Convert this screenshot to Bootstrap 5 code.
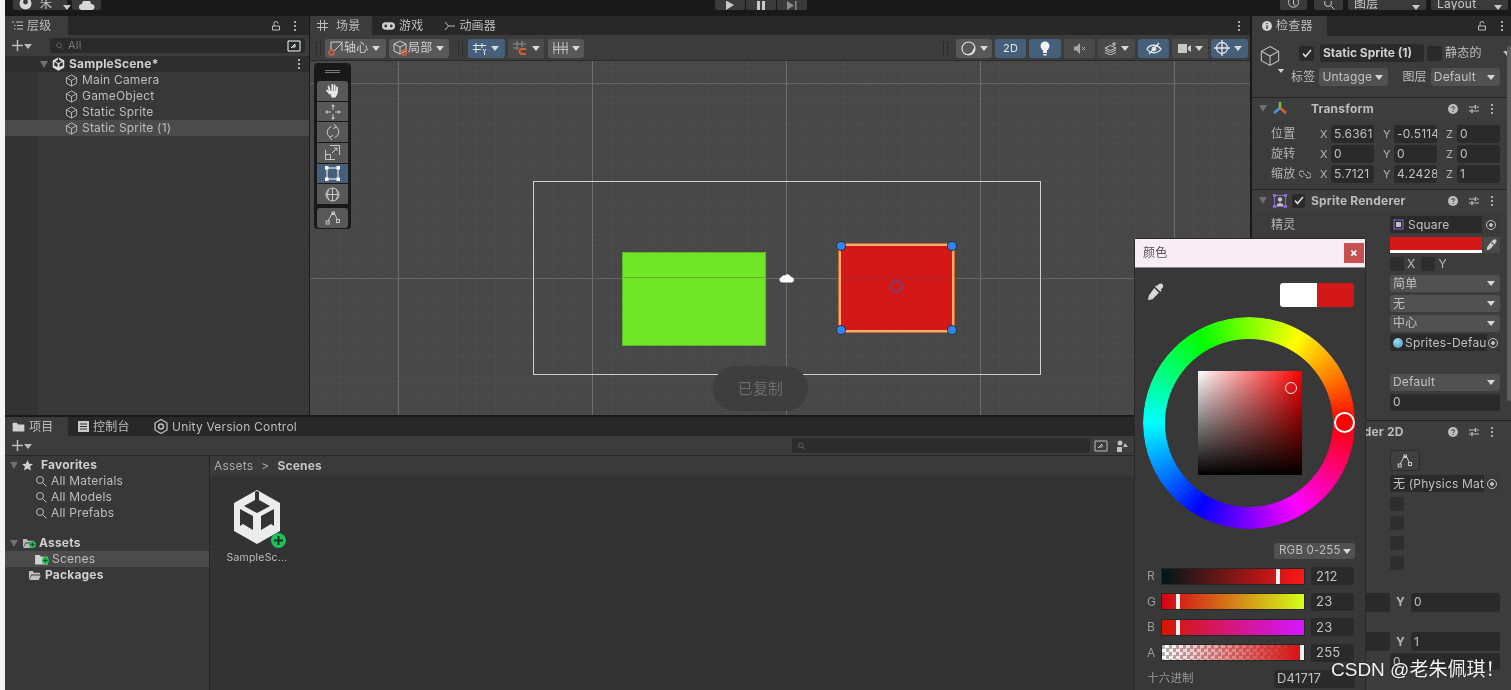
<!DOCTYPE html>
<html lang="en">
<head>
<meta charset="UTF-8">
<title>Unity Editor</title>
<link href="https://cdn.jsdelivr.net/npm/bootstrap@5.3.3/dist/css/bootstrap.min.css" rel="stylesheet">
<style>
    html, body { height: 100%; }
    body { background: #f4f4f4; overflow: hidden; margin: 0; font-family: Inter, "Noto Sans CJK SC", sans-serif; font-size: 12px; color: #bdbdbd; line-height: 1; }
    svg { display: block; flex: none; }
    .ed { height: 690px; margin-left: 5px; background: #191919; position: relative; filter: blur(.55px); overflow: hidden; white-space: nowrap; letter-spacing: .2px; }
    .ic { fill: none; stroke: currentColor; stroke-width: 1; }
    .dropdown-toggle::after { border-top: 5px solid; border-left: 4px solid transparent; border-right: 4px solid transparent; border-bottom: 0; vertical-align: 1px; }
    .topbar { height: 16px; flex: none; overflow: hidden; padding: 0 3px 0 8px; }
    .topleft { width: 702px; }
    .topgroup { height: 10px; overflow: hidden; }
    .topbtn { height: 10px; background: #3a3a3a; border-radius: 0 0 2px 2px; color: #c8c8c8; }
    .topacct { width: 54px; }
    .topcloud { width: 29px; margin-left: 5px; }
    .topplay { width: 30px; margin-right: 1px; }
    .tophist { width: 27px; margin-right: 7px; }
    .topsearch { width: 29px; margin-right: 5px; }
    .toplayer { width: 78px; margin-right: 5px; }
    .toplayout { width: 77px; }
    .topdrop { padding: 0 6px; align-items: flex-end !important; justify-content: space-between; }
    .leftcol { width: 1245px; flex: none; }
    .upper { height: 399px; flex: none; }
    .hier { width: 304px; flex: none; background: #383838; }
    .scene { margin-left: 1px; flex: 1 1 0; min-width: 0; background: #3c3c3c; }
    .tabbar { height: 19px; background: #282828; flex: none; }
    .utab { height: 19px; padding: 0 7px; }
    .utab.on { background: #3c3c3c; border-radius: 2px 2px 0 0; }
    .hier-tab { width: 63px; }
    .scene-tab { width: 62px; }
    .game-tab { padding: 0 21px 0 10px; }
    .tabkebab { margin-left: auto; margin-right: 9px; }
    .hier-tools { margin-left: auto; margin-right: 12px; gap: 12px; }
    .ins-tools { margin-left: auto; margin-right: 7px; gap: 13px; }
    .hbar { height: 21px; background: #3c3c3c; padding: 0 4px 0 6px; }
    .sfield { background: #2a2a2a; height: 15px; border-radius: 3px; color: #777; font-size: 11px; padding-left: 5px; }
    .hsearch { margin-left: 18px; flex: 1 1 0; }
    .tree { position: relative; flex: 1 1 0; background: linear-gradient(90deg, #333 0, #333 32px, #383838 32px); }
    .trow { height: 16px; }
    .trow.scn { background: #2e2e2e; padding-left: 35px; font-weight: 700; color: #d0d0d0; height: 16px; padding-right: 8px; }
    .trow.kid { padding-left: 60px; }
    .trow.sel { background: #4b4b4b; }
    .tree-tri { width: 0; height: 0; border-left: 4px solid transparent; border-right: 4px solid transparent; border-top: 7px solid #707070; }
    .sbar { height: 26px; background: #3c3c3c; border-bottom: 1px solid #2a2a2a; padding-left: 6px; padding-top: 1px; }
    .grip { width: 5px; height: 15px; border-left: 1px solid #292929; border-right: 1px solid #292929; opacity: .8; }
    .grip.mid { margin-left: 9px; }
    .ubtn { height: 19px; background: #585858; border-radius: 3px; color: #d0d0d0; }
    .ubtn.blue { background: #46607c; color: #e6e6e6; }
    .ubtn.dim { background: #4a4a4a; color: #9a9a9a; }
    .ubtn.dropdown-toggle::after { color: #d8d8d8; margin-left: 4px; }
    .b-pivot { width: 61px; margin-left: 4px; padding-left: 3px; }
    .b-local { width: 60px; margin-left: 3px; padding-left: 3px; }
    .b-snap { width: 37px; margin-left: 5px; padding-left: 5px; }
    .b-mag { width: 36px; margin-left: 3px; padding-left: 5px; }
    .b-inc { width: 36px; margin-left: 4px; padding-left: 5px; }
    .s-right { margin-left: auto; margin-right: 2px; gap: 3px; }
    .b-shade { width: 36px; padding-left: 5px; margin-left: 5px; }
    .b-2d { width: 31px; font-size: 11px; }
    .b-light { width: 32px; }
    .b-audio { width: 31px; }
    .b-fx { width: 37px; padding-left: 6px; }
    .b-hide { width: 31px; }
    .b-cam { width: 36px; padding-left: 6px; }
    .b-giz { width: 37px; padding-left: 3px; }
    .canvas { position: relative; flex: 1 1 0; overflow: hidden; background-color: #484848;
        background-image:
            linear-gradient(90deg, #6d6d6d 1px, transparent 1px),
            linear-gradient(180deg, #666 1px, transparent 1px),
            linear-gradient(90deg, #4c4c4c 1px, transparent 1px),
            linear-gradient(180deg, #4c4c4c 1px, transparent 1px);
        background-size: 194px 100%, 100% 195px, 19.4px 100%, 100% 19.5px;
        background-position: 88px 0, 0 22px, 10.4px 0, 0 3px; }
    .camrect { position: absolute; left: 223px; top: 120px; width: 508px; height: 194px; border: 1px solid #cfcfcf; }
    .sp-green { position: absolute; left: 312px; top: 191px; width: 144px; height: 94px; background: linear-gradient(180deg, transparent 25px, rgba(80,110,60,.45) 25px, rgba(80,110,60,.45) 26px, transparent 26px), #70e626; box-shadow: inset 0 0 0 1px #5cb82a; }
    .sp-red { position: absolute; left: 529px; top: 183px; width: 115px; height: 88px; background: linear-gradient(180deg, transparent 32px, rgba(120,60,60,.4) 32px, rgba(120,60,60,.4) 33px, transparent 33px), #d41717; border: 2px solid #f0b070; box-shadow: 0 0 0 1px #d0662a; }
    .hnd { position: absolute; width: 8px; height: 8px; border-radius: 50%; background: #2f86ea; box-shadow: 0 0 0 1px #24344c; }
    .hnd.a { left: -4px; top: -4px; }
    .hnd.b { right: -4px; top: -4px; }
    .hnd.c { left: -4px; bottom: -4px; }
    .hnd.d { right: -4px; bottom: -4px; }
    .pvt { position: absolute; left: 50%; top: 50%; width: 13px; height: 13px; margin: -8px 0 0 -7px; border: 2px solid #7d3f72; border-radius: 50%; }
    .camgiz { position: absolute; left: 469px; top: 210px; color: #fff; }
    .toast-copy { position: absolute; left: 403px; top: 305px; width: 95px; height: 45px; border-radius: 23px; background: #3e3e3e; color: #6c6c6c; font-size: 15px; }
    .toolpal { position: absolute; left: 4px; top: 2px; width: 37px; height: 166px; background: #191919; border-radius: 4px; padding: 0 3px; }
    .palgrip { height: 18px; }
    .palgrip i { display: block; width: 15px; height: 3px; border-top: 1px solid #777; border-bottom: 1px solid #777; }
    .palbtn { height: 19.7px; background: #585858; color: #c8c8c8; margin-bottom: 1px; }
    .palbtn.on { background: #46607c; color: #fff; }
    .palbtn.last { margin-top: 3px; border-radius: 3px; height: 20px; }
    .palstack { border-radius: 3px; overflow: hidden; }
    .project { flex: 1 1 0; background: #333; min-height: 0; border-top: 1px solid #191919; margin-top: 1px; }
    .ptab1 { width: 63px; }
    .ptab2 { width: 75px; padding-left: 10px; }
    .ptab3 { padding-left: 11px; }
    .pbar { height: 20px; background: #3c3c3c; border-bottom: 1px solid #262626; padding: 0 6px; }
    .psearch { position: relative; margin-left: 760px; width: 298px; background: #2c2c2c; }
    .pside { width: 205px; background: #383838; border-right: 1px solid #262626; padding-top: 1px; }
    .pside .trow { padding-left: 5px; }
    .pfav { font-weight: 700; color: #cfcfcf; }
    .ftree .trow.kid2 { padding-left: 30px; }
    .ptop { margin-top: 14px; }
    .pk-ico { margin-left: 18px; }
    .crumb { height: 20px; background: #3a3a3a; padding-left: 4px; color: #a8a8a8; }
    .crumb b { color: #c4c4c4; font-weight: 700; }
    .asset { width: 74px; margin: 13px 0 0 10px; }
    .alab { font-size: 10.5px; margin-top: 4px; }
    .assetbox { position: relative; width: 50px; height: 60px; }
    .plusdot { position: absolute; right: -1px; bottom: 1px; }
    .plusbig { position: absolute; right: -4px; bottom: 1px; }
    .insp { width: 259px; flex: none; margin-left: 2px; background: #3c3c3c; position: relative; }
    .insp > .tabbar { height: 20px; }
    .ins-tab { width: 75px; padding-left: 10px; height: 20px; }
    .ihead { height: 62px; border-bottom: 1px solid #242424; padding: 7px 0 0 7px; position: relative; }
    .irow1 { height: 20px; padding-left: 40px; }
    .ichk { width: 15px; height: 15px; background: #2a2a2a; border-radius: 2px; color: #e0e0e0; }
    .iname { width: 104px; height: 18px; background: #2a2a2a; border-radius: 3px; margin-left: 6px; padding-left: 3px; font-weight: 700; font-size: 12px; color: #d0d0d0; letter-spacing: 0; }
    .ichk2 { margin-left: 3px; }
    .istat { margin-left: 3px; width: 50px; }
    .itag { margin-top: 5px; padding-left: 32px; }
    .isel { background: #515151; border-radius: 3px; height: 18px; padding: 0 5px 0 3px; justify-content: space-between; color: #c0c0c0; overflow: hidden; }
    .isel.dropdown-toggle::after { color: #d8d8d8; margin-left: 2px; flex: none; }
    .itagsel { width: 69px; margin: 0 14px 0 4px; }
    .ilaysel { width: 69px; margin-left: 4px; }
    .icube { position: absolute; left: 7px; top: 9px; }
    .icaret { position: absolute; left: 26px; top: 33px; width: 0; height: 0; border-left: 3px solid transparent; border-right: 3px solid transparent; border-top: 4px solid #d8d8d8; }
    .comp { height: 21px; background: #3e3e3e; padding-left: 7px; padding-right: 17px; font-weight: 700; }
    .comp .ctitle { margin-left: 24px; }
    .comp .ctitle.tight { margin-left: 6px; }
    .comp .ctitle.solo { margin-left: 44px; }
    .comp .cico { margin-left: 6px; }
    .chk-s { width: 13px; height: 14px; margin-left: 5px; }
    .ctools { margin-left: auto; gap: 10px; }
    .tbody { padding: 5px 11px 0 19px; height: 71px; border-bottom: 1px solid #242424; }
    .xrow { height: 20px; }
    .xlab { width: 49px; color: #b4b4b4; }
    .axis { width: 11px; color: #b4b4b4; font-size: 11px; }
    .fld { background: #2a2a2a; border-radius: 3px; height: 18px; padding: 0 3px; color: #c0c0c0; overflow: hidden; }
    .xfld { width: 43px; margin-right: 9px; }
    .xfld.end { margin-right: 0; }
    .sbody { padding: 4px 11px 0 0; height: 210px; border-bottom: 1px solid #242424; }
    .prow { height: 19.7px; padding-left: 138px; position: relative; }
    .plab { position: absolute; left: 19px; top: 4px; color: #b4b4b4; }
    .pwide { flex: 1 1 0; min-width: 0; height: 17px; }
    .colbar { flex: 1 1 0; height: 16px; background: #d41717; border-bottom: 3px solid #fff; }
    .eyebtn { width: 17px; height: 16px; background: #4a4a4a; color: #d0d0d0; margin-left: 1px; }
    .smallchk { width: 14px; height: 14px; background: #2e2e2e; border-radius: 2px; }
    .chklab { margin: 0 6px 0 3px; }
    .objfld { padding-right: 0; }
    .pick { margin-left: auto; width: 18px; height: 17px; background: #3a3a3a; color: #c0c0c0; border-radius: 0 3px 3px 0; }
    .spr-ico { width: 10px; height: 10px; border-radius: 50%; background: radial-gradient(circle at 40% 35%, #9fdcf5, #3f8fc0); margin-right: 2px; flex: none; }
    .bc { padding: 0 11px 0 0; }
    .editbtn { width: 30px; height: 21px; background: #404040; border: 1px solid #2c2c2c; border-radius: 3px; color: #c8c8c8; }
    .bc-top { height: 32px; padding-top: 5px; }
    .colchk { height: 19.7px; }
    .vec { height: 19.7px; padding-left: 114px; }
    .vecf { width: 24px; height: 19px; border-radius: 0 3px 3px 0; }
    .veclab { width: 21px; padding-left: 6px; color: #b4b4b4; font-weight: 700; }
    .vecv { flex: 1 1 0; height: 19px; }
    .gap-r { height: 20px; }
    .iscroll { position: absolute; right: 0; top: 30px; width: 4px; height: 355px; background: #5e5e5e; border-radius: 3px; }
    /* colour picker */
    .picker { position: absolute; left: 1130px; top: 239px; width: 230px; height: 455px; background: #383838; border-radius: 2px 2px 0 0; box-shadow: 0 0 0 1px #2a2a2a; }
    .ptitle { height: 29px; background: #f7edf3; color: #555; padding-left: 8px; border-bottom: 1px solid #8a8a8a; font-size: 12px; }
    .pclose { width: 20px; height: 20px; margin-left: auto; margin-right: 1px; background: #c75050; color: #fff; font-size: 12px; font-weight: 700; }
    .ptop2 { padding: 15px 11px 0 12px; height: 47px; color: #d8d8d8; }
    .swatch { width: 74px; height: 24px; border-radius: 3px; overflow: hidden; margin-left: auto; }
    .swatch i { display: block; flex: 1 1 0; }
    .swatch .w { background: #fff; }
    .swatch .r { background: #d41717; }
    .wheel { position: relative; width: 212px; height: 212px; margin: 2px 0 0 8px; border-radius: 50%;
        background: conic-gradient(from 90deg, red, magenta, blue, cyan, lime, yellow, red);
        -webkit-mask: radial-gradient(circle, transparent 83.5px, #000 84.5px); mask: radial-gradient(circle, transparent 83.5px, #000 84.5px); }
    .wheelbox { position: relative; height: 212px; }
    .svsq { position: absolute; left: 62.5px; top: 54px; width: 104px; height: 104px; background: linear-gradient(0deg, #000, transparent), linear-gradient(90deg, #fff, red); }
    .svdot { position: absolute; left: 87px; top: 11px; width: 12px; height: 12px; border: 1px solid #eee; border-radius: 50%; }
    .hueh { position: absolute; left: 199px; top: 95px; width: 21px; height: 21px; border: 2px solid #fff; border-radius: 50%; background: red; }
    .pmode { height: 16px; width: 81px; background: #515151; border-radius: 3px; margin: 14px 0 0 139px; padding: 0 5px; justify-content: space-between; font-size: 11.5px; }
    .pmode.dropdown-toggle::after { color: #d8d8d8; margin-left: 2px; }
    .srow { height: 18px; padding-left: 12px; margin-top: 7.5px; }
    .srow.first { margin-top: 8px; }
    .slab { width: 14px; color: #9a9a9a; font-size: 12px; }
    .slide { position: relative; width: 144px; height: 17px; border: 1px solid #262626; }
    .sr { background: linear-gradient(90deg, #001717, #ff1717); }
    .sg { background: linear-gradient(90deg, #d40017, #d4ff17); }
    .sb { background: linear-gradient(90deg, #d41700, #d417ff); }
    .sa { background: linear-gradient(90deg, transparent, #d41717 95%), repeating-conic-gradient(#fff 0 25%, #b0b0b0 0 50%) 0 0 / 7px 7px; }
    .thumb { position: absolute; top: 0; bottom: 0; width: 4px; margin-left: -2px; background: #f2f2f2; }
    .sval { width: 43px; height: 18px; margin-left: 6px; font-size: 13px; padding-left: 5px; }
    .hexrow { height: 18px; padding-left: 12px; margin-top: 8px; }
    .hexlab { width: 127px; color: #9a9a9a; font-size: 11.5px; }
    .hexval { width: 81px; height: 18px; font-size: 13px; }
    .watermark { position: absolute; left: 1326px; top: 660px; color: #f2f2f2; font-family: "Liberation Sans", "Noto Sans CJK SC", sans-serif; font-size: 19px; line-height: 20px; letter-spacing: 0; text-shadow: 0 0 2px #222; }
</style>
</head>
<body>
<svg class="d-none" xmlns="http://www.w3.org/2000/svg">
    <symbol id="cube" viewBox="0 0 14 14"><path d="M7 1l5.500 3v6L7 13l-5.500-3V4zM1.500 4L7 7l5.500-3M7 7v6"/></symbol>
    <symbol id="dots" viewBox="0 0 4 12"><circle cx="2" cy="2" r="1.100"/><circle cx="2" cy="6" r="1.100"/><circle cx="2" cy="10" r="1.100"/></symbol>
    <symbol id="lock" viewBox="0 0 10 10"><path d="M1.500 5h7v4h-7zM3 5V2.500a2 2 0 0 1 4 0"/></symbol>
    <symbol id="mag" viewBox="0 0 12 12"><circle cx="5" cy="5" r="3.500"/><path d="M7.500 7.500l4 4"/></symbol>
    <symbol id="help" viewBox="0 0 10 10"><circle cx="5" cy="5" r="5" fill="currentColor" stroke="none"/><path d="M3.500 3.800c.3-1.500 3-1.500 3 .1 0 1-1.500 1-1.500 2" stroke="#333" fill="none"/><path d="M5 7v1" stroke="#333"/></symbol>
    <symbol id="slid" viewBox="0 0 12 12"><path d="M1 4h6M9 4h2M1 8h2M5 8h6" stroke-width="1.200"/><path d="M7.500 2v4M4 6v4" stroke-width="1.500"/></symbol>
    <symbol id="target" viewBox="0 0 12 12"><circle cx="6" cy="6" r="4.500"/><circle cx="6" cy="6" r="1.500" fill="currentColor"/></symbol>
    <symbol id="eyed" viewBox="0 0 16 16"><path fill="currentColor" stroke="none" d="M11 1.200c1-1 2.500-1 3.500 0s1 2.500 0 3.500L13 6.200l.8.8-1.300 1.300-5-5L8.800 2l.8.8zM6.800 4.800l4.400 4.400-6 6-2.500.6-1.700.2.200-1.700.6-2.500z"/></symbol>
    <symbol id="collider" viewBox="0 0 16 14"><path d="M3 10.500L7 2.500h2.500l3 6.500"/><rect x="1.200" y="10" width="3" height="3"/><rect x="11.500" y="8.500" width="3" height="3"/><rect x="7" y="1" width="2.500" height="2.500"/></symbol>
    <symbol id="unity" viewBox="0 0 50 56"><path fill-rule="evenodd" d="M25 1L48 14V42L25 55 2 42V14ZM23 3v8L12 17 23 23 25 24 27 23 38 17 27 11V3L25 2ZM8 20V37L11 35 21 41V27ZM42 20 29 27V41L39 35 42 37Z"/></symbol>
    <symbol id="folder" viewBox="0 0 14 12"><path d="M0 1h5l1.500 2H14v8.500H0z"/></symbol>
    <symbol id="ofolder" viewBox="0 0 14 12"><path d="M1 1h4l1.500 2H13v2H3.500L1.500 10H1zM4 6h10l-2.500 5H1.500z"/></symbol>
</svg>

<div class="ed d-flex flex-column">
    <!-- top toolbar, cut by the screenshot -->
    <div class="topbar d-flex">
        <div class="d-flex topgroup topleft">
            <div class="topbtn topacct d-flex align-items-end gap-2 topdrop dropdown-toggle">
                <svg width="13" height="13" viewBox="0 0 13 13"><circle cx="6.500" cy="6.500" r="6" fill="#d8d8d8"/><circle cx="6.500" cy="5" r="2.400" fill="#3a3a3a"/></svg>
                <span>朱</span>
            </div>
            <div class="topbtn topcloud d-flex align-items-end justify-content-center">
                <svg width="16" height="9" viewBox="0 0 16 9"><path d="M3 9a3 3 0 0 1 0-6 4.500 4.500 0 0 1 9 0 3 3 0 0 1 1 6z" fill="#d8d8d8"/></svg>
            </div>
        </div>
        <div class="d-flex topgroup">
            <div class="topbtn topplay d-flex align-items-end justify-content-center"><svg width="10" height="9" viewBox="0 0 10 9"><path d="M1 0h1L9 4 1 9z" fill="#c8c8c8"/></svg></div>
            <div class="topbtn topplay d-flex align-items-end justify-content-center"><svg width="10" height="9" viewBox="0 0 10 9"><path d="M1 0h3v9H1zM6 0h3v9H6z" fill="#c8c8c8"/></svg></div>
            <div class="topbtn topplay d-flex align-items-end justify-content-center"><svg width="10" height="9" viewBox="0 0 10 9"><path d="M0 0l7 4.500L0 9zM8 0h1.500v9H8z" fill="#8a8a8a"/></svg></div>
        </div>
        <div class="d-flex topgroup ms-auto">
            <div class="topbtn tophist d-flex align-items-end justify-content-center"><svg width="13" height="10" viewBox="0 0 13 10" class="ic"><path d="M2 0a5 5 0 1 0 9 0M6.500 0v4l2 1.500"/></svg></div>
            <div class="topbtn topsearch d-flex align-items-end justify-content-center"><svg width="12" height="9" viewBox="0 0 12 9" class="ic"><circle cx="5" cy="2" r="3.500"/><path d="M7.500 4.500l4 4"/></svg></div>
            <div class="topbtn toplayer d-flex topdrop dropdown-toggle"><span>图层</span></div>
            <div class="topbtn toplayout d-flex topdrop dropdown-toggle"><span>Layout</span></div>
        </div>
    </div>

    <div class="d-flex flex-grow-1 gap-0">
        <div class="leftcol d-flex flex-column">
            <div class="upper d-flex">
                <!-- hierarchy -->
                <div class="hier d-flex flex-column">
                    <div class="tabbar d-flex align-items-center">
                        <div class="utab on hier-tab d-flex align-items-center gap-1">
                            <svg width="11" height="9" viewBox="0 0 11 9" class="ic"><path d="M0 1h2M4 1h7M2 4.500h1.500M5 4.500h6M2 8h1.500M5 8h6"/></svg><span>层级</span>
                        </div>
                        <div class="d-flex align-items-center hier-tools">
                            <svg width="10" height="10" class="ic"><use href="#lock"/></svg>
                            <svg width="4" height="12" fill="#c8c8c8"><use href="#dots"/></svg>
                        </div>
                    </div>
                    <div class="hbar d-flex align-items-center">
                        <svg width="13" height="13" viewBox="0 0 13 13" class="ic"><path d="M6.500 1v11M1 6.500h11" stroke-width="1.500"/></svg>
                        <span class="dropdown-toggle"></span>
                        <div class="sfield hsearch d-flex align-items-center gap-1">
                            <svg width="9" height="8" class="ic"><use href="#mag"/></svg><span>All</span>
                            <svg width="14" height="12" viewBox="0 0 14 12" class="ic ms-auto me-1 text-light"><path d="M1 1h12v10H1zM5 7h3V4M8 4L4 8"/></svg>
                        </div>
                    </div>
                    <div class="tree">
                        <div class="trow scn d-flex align-items-center gap-1">
                            <span class="tree-tri"></span>
                            <svg width="13" height="14" fill="#e0e0e0"><use href="#unity"/></svg>
                            <span>SampleScene*</span>
                            <svg width="4" height="12" fill="#c8c8c8" class="ms-auto"><use href="#dots"/></svg>
                        </div>
                        <div class="trow kid d-flex align-items-center gap-1"><svg width="13" height="13" class="ic"><use href="#cube"/></svg><span>Main Camera</span></div>
                        <div class="trow kid d-flex align-items-center gap-1"><svg width="13" height="13" class="ic"><use href="#cube"/></svg><span>GameObject</span></div>
                        <div class="trow kid d-flex align-items-center gap-1"><svg width="13" height="13" class="ic"><use href="#cube"/></svg><span>Static Sprite</span></div>
                        <div class="trow kid sel d-flex align-items-center gap-1"><svg width="13" height="13" class="ic"><use href="#cube"/></svg><span>Static Sprite (1)</span></div>
                    </div>
                </div>

                <!-- scene -->
                <div class="scene d-flex flex-column">
                    <div class="tabbar d-flex align-items-center">
                        <div class="utab on scene-tab d-flex align-items-center gap-2">
                            <svg width="11" height="11" viewBox="0 0 11 11" class="ic"><path d="M3.500 0v11M7.500 0v11M0 3.500h11M0 7.500h11"/></svg><span>场景</span>
                        </div>
                        <div class="utab game-tab d-flex align-items-center gap-1">
                            <svg width="13" height="8" viewBox="0 0 14 8"><rect y="0" width="14" height="8" rx="4" fill="#d0d0d0"/><circle cx="4" cy="4" r="1.500" fill="#333"/><circle cx="10" cy="4" r="1.500" fill="#333"/></svg><span>游戏</span>
                        </div>
                        <div class="utab px-0 d-flex align-items-center gap-1">
                            <svg width="11" height="10" viewBox="0 0 11 10" class="ic"><path d="M1 1l3.500 4L1 9M4.500 5H11"/></svg><span>动画器</span>
                        </div>
                        <svg width="4" height="12" fill="#c8c8c8" class="tabkebab"><use href="#dots"/></svg>
                    </div>
                    <div class="sbar d-flex align-items-center">
                        <span class="grip"></span>
                        <div class="ubtn b-pivot d-flex align-items-center dropdown-toggle">
                            <svg width="16" height="16" viewBox="0 0 16 16" class="ic"><path d="M3 2h11v9M3 2v8M14 3L5 12"/><circle cx="3.500" cy="12.500" r="2.500" stroke="#e0603a" stroke-width="1.400"/></svg><span>轴心</span>
                        </div>
                        <div class="ubtn b-local d-flex align-items-center dropdown-toggle">
                            <svg width="16" height="16" viewBox="0 0 16 16" class="ic"><path d="M8 1l6 3v7l-6 3-6-3V4zM2 4l6 3 6-3M8 7v7"/><circle cx="12" cy="12.500" r="2.500" stroke="#e0603a" stroke-width="1.400"/></svg><span>局部</span>
                        </div>
                        <span class="grip mid"></span>
                        <div class="ubtn blue b-snap d-flex align-items-center dropdown-toggle">
                            <svg width="14" height="13" viewBox="0 0 14 13" class="ic"><path d="M3 1v10M9 1v5M0 3.500h13M0 7.500h8M10 7l1.500 2.500L13 7M11.500 9.500V13"/></svg>
                        </div>
                        <div class="ubtn dim b-mag d-flex align-items-center dropdown-toggle">
                            <svg width="15" height="15" viewBox="0 0 15 15" class="ic"><path d="M4 0v9M9 0v6M0 3h13M0 7h6" stroke="#8f8f8f"/><path d="M13 8H9a2.500 2.500 0 0 0 0 5h4" stroke="#d8602f" stroke-width="2"/></svg>
                        </div>
                        <div class="ubtn b-inc d-flex align-items-center dropdown-toggle">
                            <svg width="15" height="12" viewBox="0 0 15 12" class="ic"><path d="M1 0v12M5.500 0v12M10 0v12M14 0v12M0 5h15M0 7.500h15" stroke="#c0c0c0"/></svg>
                        </div>
                        <div class="d-flex align-items-center s-right">
                            <span class="grip"></span>
                            <div class="ubtn b-shade d-flex align-items-center dropdown-toggle">
                                <svg width="15" height="15" viewBox="0 0 15 15"><circle cx="7.500" cy="7.500" r="6.500" fill="none" stroke="#ddd" stroke-width="1.200"/><path d="M14 7.500a6.500 6.500 0 0 1-11 4.700c5 2 8.500 0 9.500-4.700z" fill="#ddd"/></svg>
                            </div>
                            <div class="ubtn blue b-2d d-flex align-items-center justify-content-center">2D</div>
                            <div class="ubtn blue b-light d-flex align-items-center justify-content-center">
                                <svg width="10" height="15" viewBox="0 0 10 15"><circle cx="5" cy="5" r="4.500" fill="#f0f0f0"/><rect x="3" y="9" width="4" height="3" fill="#f0f0f0"/><rect x="3.500" y="13" width="3" height="1.500" fill="#f0f0f0"/></svg>
                            </div>
                            <div class="ubtn dim b-audio d-flex align-items-center justify-content-center">
                                <svg width="12" height="11" viewBox="0 0 12 11"><path d="M0 3.500h2.500L6 0v11L2.500 7.500H0z" fill="#a8a8a8"/><path d="M8 4l3 3M11 4L8 7" stroke="#a8a8a8"/></svg>
                            </div>
                            <div class="ubtn dim b-fx d-flex align-items-center dropdown-toggle">
                                <svg width="13" height="13" viewBox="0 0 13 13" class="ic"><path d="M1 8l5.500 2.500L12 8M1 10.500L6.500 13l5.500-2.500" stroke="#c8c8c8"/><path d="M1 6l5.500 2.500L12 6 6.500 3.500zM10 0v4M8 2h4" stroke="#c8c8c8"/></svg>
                            </div>
                            <div class="ubtn blue b-hide d-flex align-items-center justify-content-center">
                                <svg width="16" height="13" viewBox="0 0 16 13" class="ic"><path d="M1 7c3-5 10-5 14 0-3 5-11 5-14 0zM3 12L13 1" stroke-width="1.300"/><circle cx="8" cy="7" r="2" fill="currentColor"/></svg>
                            </div>
                            <div class="ubtn dim b-cam d-flex align-items-center dropdown-toggle">
                                <svg width="13" height="9" viewBox="0 0 13 9"><rect width="9" height="9" fill="#c8c8c8"/><path d="M10 3l3-2v7l-3-2z" fill="#c8c8c8"/></svg>
                            </div>
                            <div class="ubtn blue b-giz d-flex align-items-center dropdown-toggle">
                                <svg width="16" height="16" viewBox="0 0 16 16" class="ic"><circle cx="8" cy="8" r="5.500" stroke-width="1.300"/><path d="M8 0v16M0 8h16" stroke-width="1.300"/></svg>
                            </div>
                        </div>
                    </div>
                    <div class="canvas">
                        <div class="camrect"></div>
                        <div class="sp-green"></div>
                        <div class="sp-red">
                            <span class="hnd a"></span><span class="hnd b"></span><span class="hnd c"></span><span class="hnd d"></span>
                            <span class="pvt"></span>
                        </div>
                        <svg class="camgiz" width="16" height="13" viewBox="0 0 16 13"><path d="M3 11.500a2.800 2.800 0 0 1-.5-5.500A3 3 0 0 1 6 4.500a3.500 3.500 0 0 1 6 1.500c3.500 0 4 5 1 5.500z" fill="#fff"/></svg>
                        <div class="toast-copy d-flex align-items-center justify-content-center">已复制</div>
                        <div class="toolpal d-flex flex-column">
                            <div class="palgrip d-flex align-items-center justify-content-center"><i></i></div>
                            <div class="palstack">
                                <div class="palbtn d-flex align-items-center justify-content-center">
                                    <svg width="16" height="16" viewBox="0 0 16 16" fill="none" stroke="#e8e8e8" stroke-linecap="round" stroke-width="1.800"><path d="M5 9L3.500 3.500M7.300 8V1.800M9.700 8V2.500M12 9V4.500M4.500 10.500L2 7.500"/><path d="M4.500 8h8v3l-2 3.500H6.500z" fill="#e8e8e8" stroke="none"/></svg>
                                </div>
                                <div class="palbtn d-flex align-items-center justify-content-center">
                                    <svg width="16" height="16" viewBox="0 0 16 16" class="ic"><path d="M8 1.500V6M8 10v4.500M1.500 8H6M10 8h4.500"/><path d="M8 0l2 2.500H6zM8 16l2-2.500H6zM0 8l2.500-2v4zM16 8l-2.500-2v4z" fill="currentColor" stroke="none"/></svg>
                                </div>
                                <div class="palbtn d-flex align-items-center justify-content-center">
                                    <svg width="16" height="16" viewBox="0 0 16 16" class="ic"><path d="M6.500 2.500a6 6 0 0 0-2 10.500M9.500 13.500a6 6 0 0 0 2-10.500M9 0l2.500 3L8 4.500M7 16l-2.500-3L8 11.500"/></svg>
                                </div>
                                <div class="palbtn d-flex align-items-center justify-content-center">
                                    <svg width="15" height="15" viewBox="0 0 15 15" class="ic"><path d="M5 .5h9.500V10M.5 5v9.500H10M.5 9.500h5v5M7 8l5-5M9 3h3v3"/></svg>
                                </div>
                                <div class="palbtn on d-flex align-items-center justify-content-center">
                                    <svg width="15" height="15" viewBox="0 0 15 15"><path d="M2 2h11v11H2z" fill="none" stroke="#fff"/><g fill="#fff"><rect width="3.500" height="3.500"/><rect x="11.500" width="3.500" height="3.500"/><rect y="11.500" width="3.500" height="3.500"/><rect x="11.500" y="11.500" width="3.500" height="3.500"/></g></svg>
                                </div>
                                <div class="palbtn d-flex align-items-center justify-content-center">
                                    <svg width="17" height="17" viewBox="0 0 17 17" class="ic"><circle cx="8.500" cy="8.500" r="6.500"/><path d="M8.500 2v13M2 8.500h13M5 3.500c-2 3-2 7 0 10M12 3.500c2 3 2 7 0 10"/></svg>
                                </div>
                            </div>
                            <div class="palbtn last d-flex align-items-center justify-content-center">
                                <svg width="16" height="14" class="ic"><use href="#collider"/></svg>
                            </div>
                        </div>
                    </div>
                </div>
            </div>

            <!-- project -->
            <div class="project d-flex flex-column">
                <div class="tabbar d-flex align-items-center">
                    <div class="utab on ptab1 d-flex align-items-center gap-1">
                        <svg width="13" height="10" fill="#d0d0d0"><use href="#folder"/></svg><span>项目</span>
                    </div>
                    <div class="utab ptab2 d-flex align-items-center gap-1">
                        <svg width="11" height="11" viewBox="0 0 11 11"><path d="M0 0h11v11H0z" fill="#c8c8c8"/><path d="M2 3h7M2 5.500h7M2 8h7" stroke="#333"/></svg><span>控制台</span>
                    </div>
                    <div class="utab ptab3 d-flex align-items-center gap-1">
                        <svg width="14" height="15" viewBox="0 0 14 15" class="ic"><path d="M7 .5l6 3.500v7l-6 3.500L1 11V4z" stroke-width="1.300"/><circle cx="7" cy="7.500" r="2.500" stroke-width="1.500"/></svg><span>Unity Version Control</span>
                    </div>
                </div>
                <div class="pbar d-flex align-items-center">
                    <svg width="13" height="13" viewBox="0 0 13 13" class="ic"><path d="M6.500 1v11M1 6.500h11" stroke-width="1.500"/></svg>
                    <span class="dropdown-toggle"></span>
                    <div class="sfield psearch d-flex align-items-center">
                        <svg width="9" height="8" class="ic"><use href="#mag"/></svg>
                    </div>
                    <svg width="14" height="12" viewBox="0 0 14 12" class="ic ms-1"><path d="M1 1h12v10H1zM5 7h3V4M8 4L4 8"/></svg>
                    <svg width="13" height="12" viewBox="0 0 13 12" class="ms-2"><circle cx="4" cy="3" r="2.500" fill="#c0c0c0"/><rect x="1" y="7" width="5" height="5" fill="#c0c0c0"/><path d="M9 3l3 4H7z" fill="#c0c0c0"/></svg>
                </div>
                <div class="d-flex flex-grow-1">
                    <div class="pside ftree">
                        <div class="trow d-flex align-items-center gap-1">
                            <span class="tree-tri"></span>
                            <svg width="11" height="11" viewBox="0 0 12 12"><path d="M6 0l1.800 4 4.200.4-3.200 2.800 1 4.300L6 9.200 2.200 11.500l1-4.300L0 4.400 4.200 4z" fill="#d0d0d0"/></svg>
                            <span class="pfav ms-1">Favorites</span>
                        </div>
                        <div class="trow kid2 d-flex align-items-center gap-1"><svg width="12" height="12" class="ic"><use href="#mag"/></svg><span>All Materials</span></div>
                        <div class="trow kid2 d-flex align-items-center gap-1"><svg width="12" height="12" class="ic"><use href="#mag"/></svg><span>All Models</span></div>
                        <div class="trow kid2 d-flex align-items-center gap-1"><svg width="12" height="12" class="ic"><use href="#mag"/></svg><span>All Prefabs</span></div>
                        <div class="trow ptop d-flex align-items-center gap-1">
                            <span class="tree-tri"></span>
                            <span class="position-relative"><svg width="13" height="11" fill="#b8b8b8"><use href="#ofolder"/></svg><svg class="plusdot" width="7" height="7" viewBox="0 0 7 7"><circle cx="3.500" cy="3.500" r="3.500" fill="#1fb94f"/><path d="M3.500 1.500v4M1.500 3.500h4" stroke="#143"/></svg></span>
                            <span class="pfav">Assets</span>
                        </div>
                        <div class="trow kid2 sel d-flex align-items-center gap-1">
                            <span class="position-relative"><svg width="13" height="11" fill="#d0d0d0"><use href="#folder"/></svg><svg class="plusdot" width="7" height="7" viewBox="0 0 7 7"><circle cx="3.500" cy="3.500" r="3.500" fill="#1fb94f"/><path d="M3.500 1.500v4M1.500 3.500h4" stroke="#143"/></svg></span>
                            <span>Scenes</span>
                        </div>
                        <div class="trow d-flex align-items-center gap-1">
                            <span class="pk-ico"><svg width="13" height="11" fill="#c0c0c0"><use href="#ofolder"/></svg></span>
                            <span class="pfav">Packages</span>
                        </div>
                    </div>
                    <div class="flex-grow-1">
                        <div class="crumb d-flex align-items-center gap-1">
                            <span>Assets</span><span class="ms-1">&gt;</span><b class="ms-1">Scenes</b>
                        </div>
                        <div class="asset d-flex flex-column align-items-center">
                            <div class="assetbox">
                                <svg width="50" height="56" fill="#ececec"><use href="#unity"/></svg>
                                <svg class="plusbig" width="15" height="15" viewBox="0 0 15 15"><circle cx="7.500" cy="7.500" r="7.500" fill="#1cc25a"/><path d="M7.500 3v9M3 7.500h9" stroke="#14381f" stroke-width="2"/></svg>
                            </div>
                            <div class="alab">SampleSc...</div>
                        </div>
                    </div>
                </div>
            </div>
        </div>

        <!-- inspector -->
        <div class="insp d-flex flex-column">
            <div class="tabbar d-flex align-items-center">
                <div class="utab on ins-tab d-flex align-items-center gap-1">
                    <svg width="10" height="10" viewBox="0 0 10 10"><circle cx="5" cy="5" r="5" fill="#d0d0d0"/><path d="M5 2v1M5 4.200V8" stroke="#333" stroke-width="1.300"/></svg><span>检查器</span>
                </div>
                <div class="d-flex align-items-center ins-tools">
                    <svg width="10" height="10" class="ic"><use href="#lock"/></svg>
                    <svg width="4" height="12" fill="#c8c8c8"><use href="#dots"/></svg>
                </div>
            </div>
            <div class="ihead">
                <svg class="icube ic" width="22" height="22" viewBox="0 0 14 14"><path d="M7 1l5.500 3v6L7 13l-5.500-3V4zM1.500 4L7 7l5.500-3M7 7v6" stroke-width=".7"/></svg>
                <span class="icaret"></span>
                <div class="irow1 d-flex align-items-center">
                    <span class="ichk d-flex align-items-center justify-content-center"><svg width="10" height="9" viewBox="0 0 10 9" class="ic"><path d="M1 4.500l2.500 3L9 1" stroke-width="1.500"/></svg></span>
                    <span class="iname d-flex align-items-center">Static Sprite (1)</span>
                    <span class="ichk ichk2"></span>
                    <span class="istat">静态的</span>
                    <span class="dropdown-toggle ms-2"></span>
                </div>
                <div class="itag d-flex align-items-center">
                    <span>标签</span>
                    <span class="isel itagsel d-flex align-items-center dropdown-toggle"><span>Untagge</span></span>
                    <span>图层</span>
                    <span class="isel ilaysel d-flex align-items-center dropdown-toggle"><span>Default</span></span>
                </div>
            </div>
            <div class="comp d-flex align-items-center">
                <span class="tree-tri"></span>
                <svg class="cico" width="14" height="13" viewBox="0 0 14 13"><path d="M7 6V0" stroke="#6cc83c" stroke-width="2.500"/><path d="M7 6L1 11" stroke="#3aa0e0" stroke-width="2.500"/><path d="M7 6l6 5" stroke="#e0603a" stroke-width="2.500"/></svg>
                <span class="ctitle">Transform</span>
                <div class="d-flex align-items-center ctools">
                    <svg width="10" height="10" fill="#c8c8c8"><use href="#help"/></svg>
                    <svg width="12" height="12" class="ic"><use href="#slid"/></svg>
                    <svg width="4" height="12" fill="#c8c8c8"><use href="#dots"/></svg>
                </div>
            </div>
            <div class="tbody">
                <div class="xrow d-flex align-items-center">
                    <span class="xlab">位置</span>
                    <span class="axis">X</span><span class="fld xfld d-flex align-items-center">5.6361</span>
                    <span class="axis">Y</span><span class="fld xfld d-flex align-items-center">-0.5114</span>
                    <span class="axis">Z</span><span class="fld xfld end d-flex align-items-center">0</span>
                </div>
                <div class="xrow d-flex align-items-center">
                    <span class="xlab">旋转</span>
                    <span class="axis">X</span><span class="fld xfld d-flex align-items-center">0</span>
                    <span class="axis">Y</span><span class="fld xfld d-flex align-items-center">0</span>
                    <span class="axis">Z</span><span class="fld xfld end d-flex align-items-center">0</span>
                </div>
                <div class="xrow d-flex align-items-center">
                    <span class="xlab d-flex align-items-center gap-1">缩放<svg width="12" height="9" viewBox="0 0 12 9" class="ic"><path d="M5 1.500L3 1a2.500 2.500 0 0 0-1 5l2 1M7 7.500l2 .5a2.500 2.500 0 0 0 1-5L8 2M4 3l4 3"/></svg></span>
                    <span class="axis">X</span><span class="fld xfld d-flex align-items-center">5.7121</span>
                    <span class="axis">Y</span><span class="fld xfld d-flex align-items-center">4.2428</span>
                    <span class="axis">Z</span><span class="fld xfld end d-flex align-items-center">1</span>
                </div>
            </div>
            <div class="comp d-flex align-items-center">
                <span class="tree-tri"></span>
                <svg class="cico" width="14" height="14" viewBox="0 0 14 14"><path d="M1.500 1.500h11v11h-11z" fill="none" stroke="#8a6ad0"/><circle cx="7" cy="5.500" r="2.200" fill="#c0c0c0"/><path d="M3.500 12c0-4 7-4 7 0z" fill="#c0c0c0"/><g fill="#8a6ad0"><rect width="3" height="3"/><rect x="11" width="3" height="3"/><rect y="11" width="3" height="3"/><rect x="11" y="11" width="3" height="3"/></g></svg>
                <span class="ichk chk-s d-flex align-items-center justify-content-center"><svg width="10" height="9" viewBox="0 0 10 9" class="ic"><path d="M1 4.500l2.500 3L9 1" stroke-width="1.500"/></svg></span>
                <span class="ctitle tight">Sprite Renderer</span>
                <div class="d-flex align-items-center ctools">
                    <svg width="10" height="10" fill="#c8c8c8"><use href="#help"/></svg>
                    <svg width="12" height="12" class="ic"><use href="#slid"/></svg>
                    <svg width="4" height="12" fill="#c8c8c8"><use href="#dots"/></svg>
                </div>
            </div>
            <div class="sbody">
                <div class="prow d-flex align-items-center">
                    <span class="plab">精灵</span>
                    <div class="fld objfld pwide d-flex align-items-center gap-1">
                        <svg width="11" height="11" viewBox="0 0 11 11"><rect x="1" y="1" width="9" height="9" fill="none" stroke="#8a6ad0"/><rect x="3" y="3" width="5" height="5" fill="#c0c0c0"/></svg><span>Square</span>
                        <span class="pick d-flex align-items-center justify-content-center"><svg width="12" height="12" class="ic"><use href="#target"/></svg></span>
                    </div>
                </div>
                <div class="prow d-flex align-items-center">
                    <span class="plab">颜色</span>
                    <div class="colbar"></div>
                    <div class="eyebtn d-flex align-items-center justify-content-center"><svg width="11" height="11"><use href="#eyed"/></svg></div>
                </div>
                <div class="prow d-flex align-items-center">
                    <span class="smallchk"></span><span class="chklab">X</span><span class="smallchk"></span><span class="chklab">Y</span>
                </div>
                <div class="prow d-flex align-items-center"><div class="isel pwide d-flex align-items-center dropdown-toggle"><span>简单</span></div></div>
                <div class="prow d-flex align-items-center"><div class="isel pwide d-flex align-items-center dropdown-toggle"><span>无</span></div></div>
                <div class="prow d-flex align-items-center"><div class="isel pwide d-flex align-items-center dropdown-toggle"><span>中心</span></div></div>
                <div class="prow d-flex align-items-center">
                    <div class="fld objfld pwide d-flex align-items-center">
                        <span class="spr-ico"></span><span>Sprites-Defau</span>
                        <span class="pick d-flex align-items-center justify-content-center"><svg width="12" height="12" class="ic"><use href="#target"/></svg></span>
                    </div>
                </div>
                <div class="prow"></div>
                <div class="prow d-flex align-items-center"><div class="isel pwide d-flex align-items-center dropdown-toggle"><span>Default</span></div></div>
                <div class="prow d-flex align-items-center"><div class="fld pwide d-flex align-items-center">0</div></div>
            </div>
            <div class="comp d-flex align-items-center">
                <span class="tree-tri"></span>
                <span class="ctitle solo">Box Collider 2D</span>
                <div class="d-flex align-items-center ctools">
                    <svg width="10" height="10" fill="#c8c8c8"><use href="#help"/></svg>
                    <svg width="12" height="12" class="ic"><use href="#slid"/></svg>
                    <svg width="4" height="12" fill="#c8c8c8"><use href="#dots"/></svg>
                </div>
            </div>
            <div class="bc">
                <div class="prow bc-top d-flex align-items-center"><div class="editbtn d-flex align-items-center justify-content-center"><svg width="16" height="14" class="ic"><use href="#collider"/></svg></div></div>
                <div class="prow d-flex align-items-center">
                    <div class="fld objfld pwide d-flex align-items-center">
                        <span>无 (Physics Mat</span>
                        <span class="pick d-flex align-items-center justify-content-center"><svg width="12" height="12" class="ic"><use href="#target"/></svg></span>
                    </div>
                </div>
                <div class="prow colchk d-flex align-items-center"><span class="smallchk"></span></div>
                <div class="prow colchk d-flex align-items-center"><span class="smallchk"></span></div>
                <div class="prow colchk d-flex align-items-center"><span class="smallchk"></span></div>
                <div class="prow colchk d-flex align-items-center"><span class="smallchk"></span></div>
                <div class="gap-r"></div>
                <div class="vec d-flex align-items-center">
                    <span class="fld vecf"></span><span class="veclab">Y</span><span class="fld vecv d-flex align-items-center">0</span>
                </div>
                <div class="gap-r"></div>
                <div class="vec d-flex align-items-center">
                    <span class="fld vecf"></span><span class="veclab">Y</span><span class="fld vecv d-flex align-items-center">1</span>
                </div>
                <div class="prow d-flex align-items-center"><div class="fld pwide d-flex align-items-center">0</div></div>
            </div>
            <span class="iscroll"></span>
        </div>
    </div>

    <!-- colour picker window -->
    <div class="picker">
        <div class="ptitle d-flex align-items-center">
            <span>颜色</span>
            <span class="pclose d-flex align-items-center justify-content-center">×</span>
        </div>
        <div class="ptop2 d-flex align-items-start">
            <svg width="17" height="17"><use href="#eyed"/></svg>
            <div class="swatch d-flex"><i class="w"></i><i class="r"></i></div>
        </div>
        <div class="wheelbox">
            <div class="wheel"></div>
            <div class="svsq"><span class="svdot"></span></div>
            <span class="hueh"></span>
        </div>
        <div class="pmode d-flex align-items-center dropdown-toggle"><span>RGB 0-255</span></div>
        <div class="srow first d-flex align-items-center">
            <span class="slab">R</span>
            <div class="slide sr"><span class="thumb" style="left:82%"></span></div>
            <span class="fld sval d-flex align-items-center">212</span>
        </div>
        <div class="srow d-flex align-items-center">
            <span class="slab">G</span>
            <div class="slide sg"><span class="thumb" style="left:11%"></span></div>
            <span class="fld sval d-flex align-items-center">23</span>
        </div>
        <div class="srow d-flex align-items-center">
            <span class="slab">B</span>
            <div class="slide sb"><span class="thumb" style="left:11%"></span></div>
            <span class="fld sval d-flex align-items-center">23</span>
        </div>
        <div class="srow d-flex align-items-center">
            <span class="slab">A</span>
            <div class="slide sa"><span class="thumb" style="left:98.5%"></span></div>
            <span class="fld sval d-flex align-items-center">255</span>
        </div>
        <div class="hexrow d-flex align-items-center">
            <span class="hexlab">十六进制</span>
            <span class="fld hexval d-flex align-items-center">D41717</span>
        </div>
    </div>

    <div class="watermark">CSDN @老朱佩琪！</div>
</div>
<script src="https://cdn.jsdelivr.net/npm/bootstrap@5.3.3/dist/js/bootstrap.bundle.min.js"></script>
</body>
</html>
